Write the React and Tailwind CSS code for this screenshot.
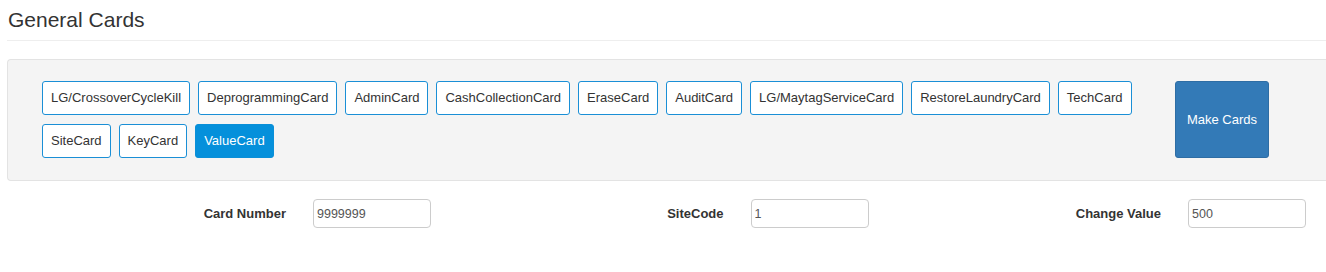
import React from "react";

const CARD_TYPES = [
    "LG/CrossoverCycleKill",
    "DeprogrammingCard",
    "AdminCard",
    "CashCollectionCard",
    "EraseCard",
    "AuditCard",
    "LG/MaytagServiceCard",
    "RestoreLaundryCard",
    "TechCard",
    "SiteCard",
    "KeyCard",
    "ValueCard",
];

const FIELDS = [
    { label: "Card Number", value: "9999999" },
    { label: "SiteCode", value: "1" },
    { label: "Change Value", value: "500" },
];

const App = () => {
    const selected = "ValueCard";

    return (
        <div className="w-[1326px] bg-white text-[#333] font-['Liberation_Sans',Arial,sans-serif]">
            <div className="ml-[7px] h-[41px] border-b border-[#eee] pl-px pt-[7px] text-[21px] leading-[26px]">
                General Cards
            </div>

            <div className="mt-[18px] ml-[7px] flex items-start rounded-l border border-r-0 border-[#e3e3e3] bg-[#f4f4f4] pl-[34px] pt-[21px] pb-[22px]">
                <div className="flex w-[1110px] flex-wrap gap-x-[8px] gap-y-[9px]">
                    {CARD_TYPES.map((card) => (
                        <button
                            key={card}
                            className={
                                card === selected
                                    ? "h-[34px] rounded-[3px] border border-[#0a8fd8] bg-[#0590db] px-[8px] text-[13px] text-white"
                                    : "h-[34px] rounded-[3px] border border-[#1a8fd6] bg-white px-[8px] text-[13px] text-[#333]"
                            }
                        >
                            {card}
                        </button>
                    ))}
                </div>
                <button className="ml-[23px] h-[77px] w-[94px] rounded-[3px] border border-[#2e6da4] bg-[#337ab7] text-[13px] text-white">
                    Make Cards
                </button>
            </div>

            <div className="mt-[18px] flex">
                {FIELDS.map((field) => (
                    <div key={field.label} className="flex w-[437.5px] shrink-0 items-center">
                        <label className="w-[286px] text-right text-[13px] font-bold">
                            {field.label}
                        </label>
                        <input
                            className="ml-[27px] h-[29px] w-[118px] rounded border border-[#ccc] pl-[3px] text-[12.5px] text-[#555] outline-none"
                            defaultValue={field.value}
                        />
                    </div>
                ))}
            </div>
            <div className="h-[44px]" />
        </div>
    );
};

export default App;
